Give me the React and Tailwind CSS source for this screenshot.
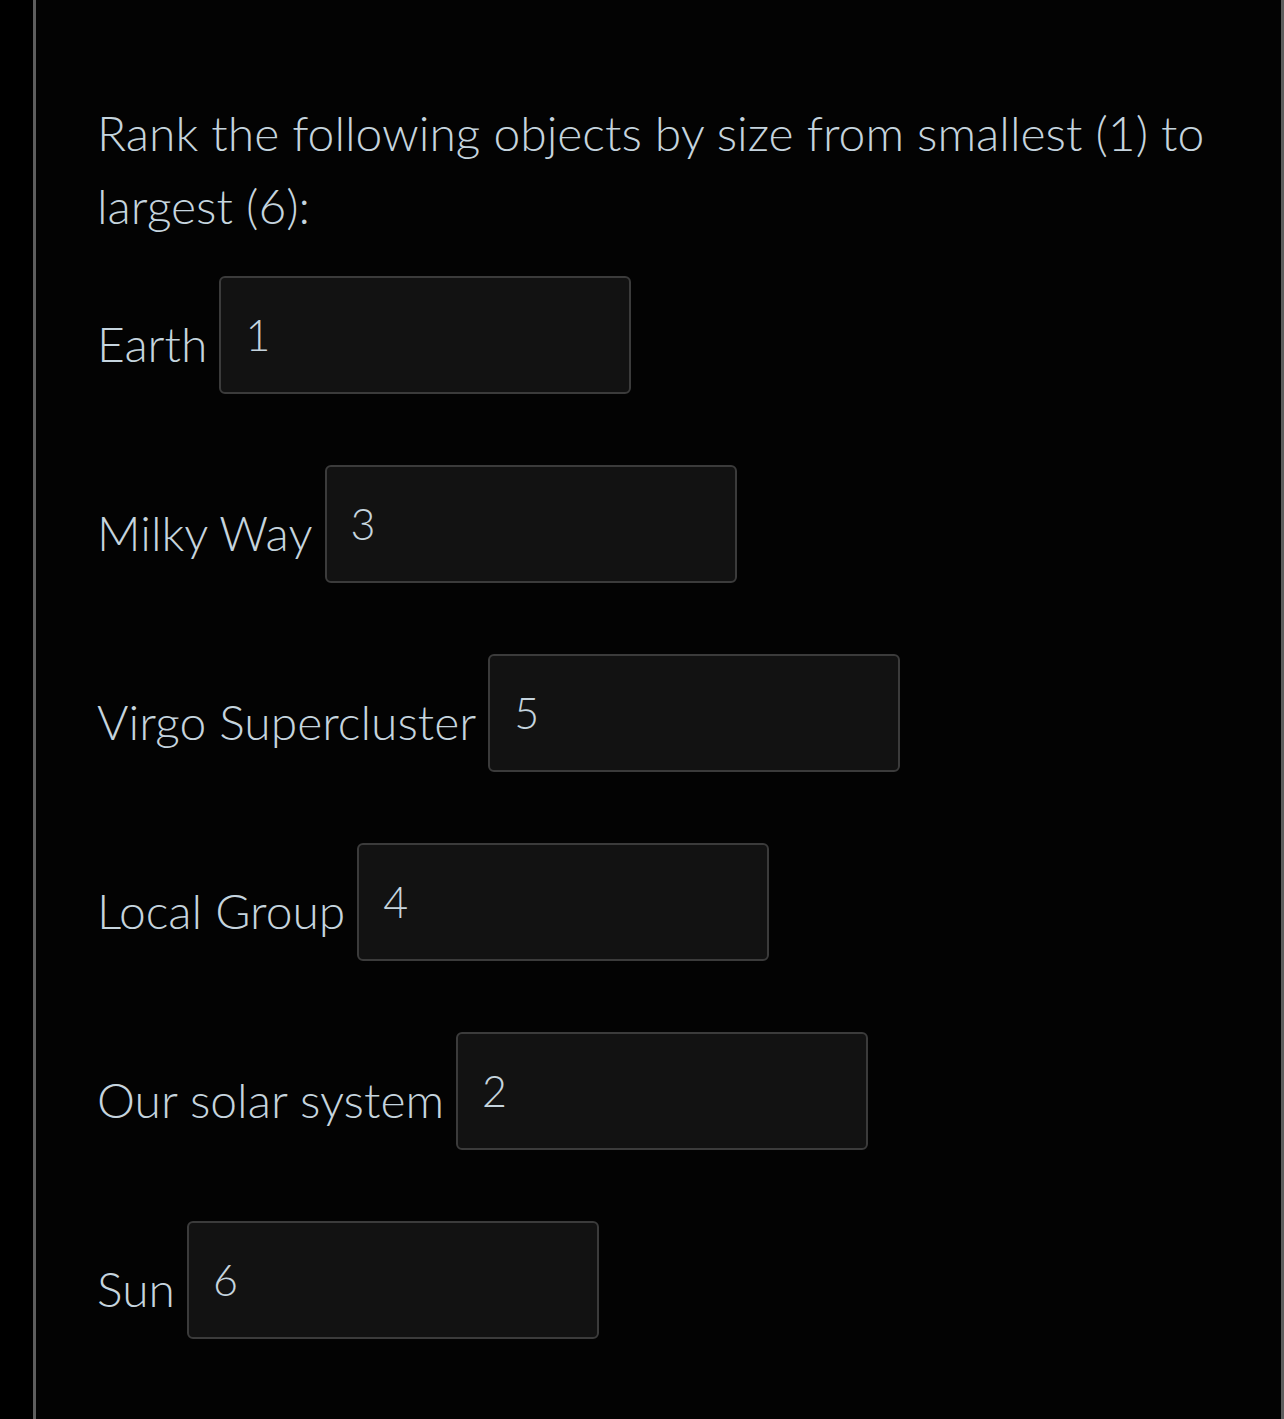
const rows = [
    { label: "Earth", value: "1" },
    { label: "Milky Way", value: "3" },
    { label: "Virgo Supercluster", value: "5" },
    { label: "Local Group", value: "4" },
    { label: "Our solar system", value: "2" },
    { label: "Sun", value: "6" },
];

const RankRow = ({ label, value }) => {
    return (
        <div className="flex items-center gap-[12px]">
            <span className="mt-[18px] text-[48px] leading-none">{label}</span>
            <input
                className="w-[412px] h-[118px] rounded-[6px] border-2 border-[#3b3b3b] bg-[#121212] pl-[24px] pb-[2px] text-[43px] font-light text-[#c5d4de] outline-none"
                style={{ fontFamily: "'Lato Light', Lato, sans-serif" }}
                type="text"
                defaultValue={value}
                readOnly
            />
        </div>
    );
};

export default function App() {
    return (
        <div className="min-h-[1419px] bg-black">
            <div
                className="ml-[33px] min-h-[1419px] border-x-[3px] border-[#5e5e5e] bg-[#030303] pl-[61px] pr-[50px] pt-[100px] font-light text-[#c5d4de]"
                style={{ fontFamily: "'Lato Light', Lato, 'Open Sans', sans-serif" }}
            >
                <p className="text-[48px] leading-[73px] -mt-[4px]">
                    Rank the following objects by size from smallest (1) to largest (6):
                </p>
                <div className="mt-[34px] flex flex-col gap-[71px]">
                    {rows.map((row) => (
                        <RankRow key={row.label} label={row.label} value={row.value} />
                    ))}
                </div>
            </div>
        </div>
    );
}
